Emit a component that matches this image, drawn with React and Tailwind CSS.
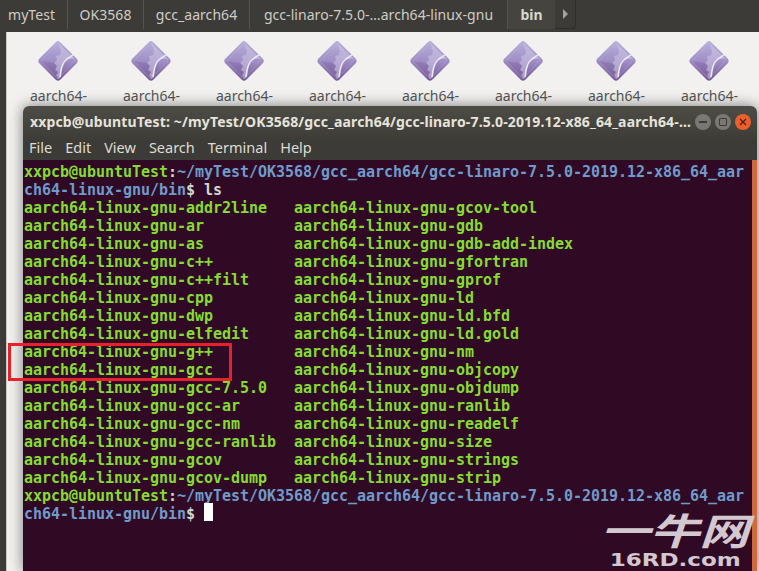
import React from "react";

const tabs = [
  { label: "myTest", width: "w-[68px] pr-[4px]" },
  { label: "OK3568", width: "w-[76px]" },
  { label: "gcc_aarch64", width: "w-[106px]" },
  { label: "gcc-linaro-7.5.0-…arch64-linux-gnu", width: "w-[258px]" },
];

const rows = [
  ["aarch64-linux-gnu-addr2line", "aarch64-linux-gnu-gcov-tool"],
  ["aarch64-linux-gnu-ar", "aarch64-linux-gnu-gdb"],
  ["aarch64-linux-gnu-as", "aarch64-linux-gnu-gdb-add-index"],
  ["aarch64-linux-gnu-c++", "aarch64-linux-gnu-gfortran"],
  ["aarch64-linux-gnu-c++filt", "aarch64-linux-gnu-gprof"],
  ["aarch64-linux-gnu-cpp", "aarch64-linux-gnu-ld"],
  ["aarch64-linux-gnu-dwp", "aarch64-linux-gnu-ld.bfd"],
  ["aarch64-linux-gnu-elfedit", "aarch64-linux-gnu-ld.gold"],
  ["aarch64-linux-gnu-g++", "aarch64-linux-gnu-nm"],
  ["aarch64-linux-gnu-gcc", "aarch64-linux-gnu-objcopy"],
  ["aarch64-linux-gnu-gcc-7.5.0", "aarch64-linux-gnu-objdump"],
  ["aarch64-linux-gnu-gcc-ar", "aarch64-linux-gnu-ranlib"],
  ["aarch64-linux-gnu-gcc-nm", "aarch64-linux-gnu-readelf"],
  ["aarch64-linux-gnu-gcc-ranlib", "aarch64-linux-gnu-size"],
  ["aarch64-linux-gnu-gcov", "aarch64-linux-gnu-strings"],
  ["aarch64-linux-gnu-gcov-dump", "aarch64-linux-gnu-strip"],
];

const icons = [0, 1, 2, 3, 4, 5, 6, 7];

function ExecIcon({ id }) {
  return (
    <svg width="42" height="42" viewBox="0 0 42 42">
      <defs>
        <linearGradient id={`d${id}`} x1="0" y1="0" x2="0" y2="1">
          <stop offset="0" stopColor="#b8b0da" />
          <stop offset="0.5" stopColor="#a08fc6" />
          <stop offset="1" stopColor="#735595" />
        </linearGradient>
      </defs>
      <path d="M21 1 Q22 1 23 2 L40 19 Q41.5 21 40 23 L23 40 Q21 41.5 19 40 L2 23 Q0.5 21 2 19 L19 2 Q20 1 21 1Z" fill={`url(#d${id})`} />
      <path d="M21 3 L38 19 L30 19 L25 24 L23 38 L21 39 L19 35 L21 32 L18 30 L20 26 L17 23 L20 20 L19 16 L23 15 L24 11 Z" fill="#cdc6e4" opacity="0.55" />
      <path d="M3 21 L17 23 L20 26 L18 30 L21 32 L19 35 L21 39 Z" fill="#7f659f" opacity="0.4" />
      <path d="M36 15 L30 19 Q25 23 24 31 L23 37" fill="none" stroke="#ece8f4" strokeWidth="1.6" />
      <path d="M21 3 L38 20 L21 39 L4 21 Z" fill="none" stroke="#c8c0e0" strokeWidth="0.5" opacity="0.6" />
    </svg>
  );
}

function Prompt() {
  return (
    <div className="h-[18px] whitespace-pre">
      <span className="text-[#85dc30]">xxpcb@ubuntuTest</span>
      <span className="text-[#d3d7cf]">:</span>
      <span className="text-[#6f9bcb]">~/myTest/OK3568/gcc_aarch64/gcc-linaro-7.5.0-2019.12-x86_64_aar</span>
    </div>
  );
}

function WindowButton({ color, children }) {
  return (
    <div className={`w-[16px] h-[16px] rounded-full flex items-center justify-center ${color}`}>
      {children}
    </div>
  );
}

export default function App() {
  return (
    <div className="relative w-[759px] h-[571px] overflow-hidden bg-[#3c3b37] font-['Noto_Sans',sans-serif]">
      <div className="flex h-[29px] items-stretch text-[14px] text-[#cfcdc6]">
        {tabs.map((tab) => (
          <div key={tab.label} className={`${tab.width} flex items-center justify-center border-r border-[#55544e] whitespace-nowrap tracking-[0.05px]`}>
            {tab.label}
          </div>
        ))}
        <div className="w-[47px] flex items-center justify-center bg-[#45443e] font-bold text-[#d8d6cf]">bin</div>
        <div className="w-[21px] flex items-center justify-center border-r border-b border-[#2f2e2a] rounded-br">
          <div className="w-0 h-0 border-y-[5px] border-y-transparent border-l-[5px] border-l-[#a5a39c]" />
        </div>
      </div>

      <div className="mt-[3px] ml-[6px] h-[539px] bg-[#f2f1f0] flex pl-[4px] pt-[8px] items-start border-l border-[#c9c8c5]">
        {icons.map((i) => (
          <div key={i} className="w-[93px] shrink-0 flex flex-col items-center">
            <ExecIcon id={i} />
            <div className="mt-[4px] ml-[2px] text-[14px] leading-[19px] text-[#555555]">aarch64-</div>
          </div>
        ))}
      </div>

      <div className="absolute left-[23px] top-[106px] w-[734px] h-[465px] flex flex-col rounded-t-[6px] overflow-hidden shadow-[0_0_14px_rgba(0,0,0,0.5)]">
        <div className="h-[34px] flex items-center pl-[7px] pr-[6px] pb-[3px] bg-gradient-to-b from-[#4e4c46] to-[#3d3c37]">
          <div className="w-[665px] text-[14px] font-bold tracking-[0.15px] text-[#e6e3dc] whitespace-nowrap overflow-hidden">
            xxpcb@ubuntuTest: ~/myTest/OK3568/gcc_aarch64/gcc-linaro-7.5.0-2019.12-x86_64_aarch64-...
          </div>
          <div className="flex gap-[4px] ml-auto">
            <WindowButton color="bg-[#7a7872]">
              <div className="w-[8px] h-[2px] bg-[#3c3b37]" />
            </WindowButton>
            <WindowButton color="bg-[#7a7872]">
              <div className="w-[8px] h-[8px] rounded-[1px] border border-[#3c3b37]" />
            </WindowButton>
            <WindowButton color="bg-[#e9602c]">
              <svg width="8" height="8" viewBox="0 0 8 8">
                <path d="M1 1 L7 7 M7 1 L1 7" stroke="#5a2008" strokeWidth="1.4" />
              </svg>
            </WindowButton>
          </div>
        </div>
        <div className="h-[20px] flex items-center gap-[13px] pl-[6px] pb-[4px] bg-[#3c3b37] text-[14.5px] text-[#dfdbd2]">
          <span>File</span>
          <span>Edit</span>
          <span>View</span>
          <span>Search</span>
          <span>Terminal</span>
          <span>Help</span>
        </div>
        <div className="flex-1 flex bg-[#300a24]">
          <div className="flex-1 pt-[3px] pl-[1px] font-['DejaVu_Sans_Mono',monospace] font-bold text-[15px] leading-[18px] tracking-[-0.03px] text-[#85dc30]">
            <Prompt />
            <div className="h-[18px] whitespace-pre">
              <span className="text-[#6f9bcb]">ch64-linux-gnu/bin</span>
              <span className="text-[#d3d7cf]">$ </span>
              <span className="text-[#d3d7cf]">ls</span>
            </div>
            {rows.map(([left, right]) => (
              <div key={left} className="flex h-[18px] whitespace-pre">
                <span className="w-[270px]">{left}</span>
                <span>{right}</span>
              </div>
            ))}
            <Prompt />
            <div className="h-[18px] whitespace-pre flex items-center">
              <span className="text-[#6f9bcb]">ch64-linux-gnu/bin</span>
              <span className="text-[#d3d7cf]">$ </span>
              <span className="w-[9px] h-[18px] -translate-y-[2px] bg-white" />
            </div>
          </div>
          <div className="w-[5px] bg-[#cf6a3f]" />
        </div>
      </div>

      <div className="absolute left-[8px] top-[343px] w-[224px] h-[38px] border-[3px] border-[#e8202a]" />

      <div className="absolute left-[600px] top-[509px] w-[148px] flex flex-col items-center gap-[3px] text-[#d4c8d0]">
        <div className="h-[40px] text-[37px] leading-[40px] font-bold italic whitespace-nowrap scale-x-[1.34] font-['Noto_Sans_CJK_SC',sans-serif]">一牛网</div>
        <div className="h-[16px] ml-[3px] text-[18px] leading-[16px] font-bold whitespace-nowrap scale-x-[1.28] font-['DejaVu_Sans',sans-serif]">16RD.com</div>
      </div>
    </div>
  );
}
